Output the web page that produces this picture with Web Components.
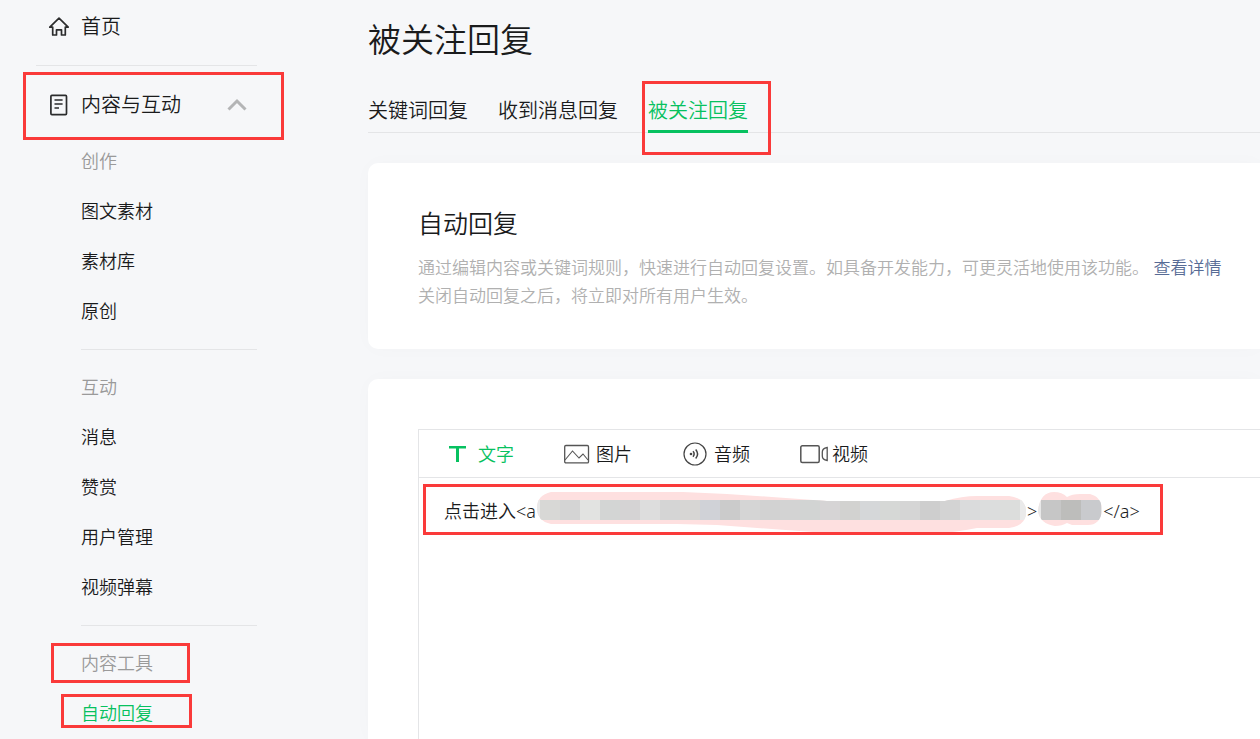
<!DOCTYPE html>
<html lang="zh-CN">
<head>
<meta charset="utf-8">
<meta name="viewport" content="width=device-width, initial-scale=1">
<title>被关注回复</title>
<style>
  html { background: #f6f7f9; }
  body {
    margin: 0;
    color: #1a1b1c;
    font-family: "Noto Sans", "Noto Sans CJK SC", sans-serif;
    font-weight: 350;
    font-size: 18px;
    overflow-x: hidden;
    --green: #07c160;
    --line: #e4e5e7;
    --muted: #9a9a9a;
    --mark: #fa3a3a;
  }
</style>
</head>
<body>
<app-shell>
  <side-nav slot="nav">
    <nav-entry icon="home">首页</nav-entry>
    <nav-divider wide></nav-divider>
    <nav-entry icon="doc" expanded marked>内容与互动</nav-entry>
    <nav-label>创作</nav-label>
    <nav-link>图文素材</nav-link>
    <nav-link>素材库</nav-link>
    <nav-link>原创</nav-link>
    <nav-divider></nav-divider>
    <nav-label>互动</nav-label>
    <nav-link>消息</nav-link>
    <nav-link>赞赏</nav-link>
    <nav-link>用户管理</nav-link>
    <nav-link>视频弹幕</nav-link>
    <nav-divider></nav-divider>
    <nav-label marked>内容工具</nav-label>
    <nav-link active marked>自动回复</nav-link>
  </side-nav>
  <page-title>被关注回复</page-title>
  <tab-bar>
    <tab-item>关键词回复</tab-item>
    <tab-item>收到消息回复</tab-item>
    <tab-item active>被关注回复</tab-item>
  </tab-bar>
  <info-card heading="自动回复">
    通过编辑内容或关键词规则，快速进行自动回复设置。如具备开发能力，可更灵活地使用该功能。<text-link>查看详情</text-link><br>关闭自动回复之后，将立即对所有用户生效。
  </info-card>
  <editor-card>
    <tool-item slot="tools" icon="text" active>文字</tool-item>
    <tool-item slot="tools" icon="image">图片</tool-item>
    <tool-item slot="tools" icon="audio">音频</tool-item>
    <tool-item slot="tools" icon="video">视频</tool-item>
    <span>点击进入&lt;a</span><pixel-smear kind="long"></pixel-smear><span>&gt;</span><pixel-smear kind="short"></pixel-smear><span>&lt;/a&gt;</span>
  </editor-card>
</app-shell>

<script>
const define = (name, render) => customElements.define(name, class extends HTMLElement {
  constructor() { super(); this.attachShadow({ mode: 'open' }); }
  connectedCallback() { this.shadowRoot.innerHTML = render(this); }
});

const icons = {
  home: `<svg width="22" height="22" viewBox="0 0 22 22" fill="none" stroke="#2b2c2d" stroke-width="1.7" stroke-linejoin="round"><path d="M11 2.2 L20.2 11.2 H17.3 V19 H13.5 V13.8 H8.5 V19 H4.7 V11.2 H1.8 Z"/></svg>`,
  doc: `<svg width="22" height="22" viewBox="0 0 22 22" fill="none" stroke="#2b2c2d" stroke-width="1.7"><rect x="2.9" y="1.4" width="15.6" height="19.2" rx="1"/><path d="M6.5 6 H14.6 M6.5 10 H14.6 M6.5 14 H11"/></svg>`,
  chevron: `<svg width="20" height="14" viewBox="0 0 20 14" fill="none" stroke="#b4b5b6" stroke-width="3"><path d="M1.5 11.5 L10 3 L18.5 11.5"/></svg>`,
  text: `<svg width="28" height="24" viewBox="0 0 28 24"><path d="M3 4 H20 V6.6 H13 V20 H10 V6.6 H3 Z" fill="#07c160"/></svg>`,
  image: `<svg width="28" height="24" viewBox="0 0 28 24" fill="none" stroke="#555" stroke-width="1.3"><rect x=".7" y="3.5" width="23.8" height="17.4" rx="1.2"/><path stroke-width="1.1" d="M1 18 L8.5 9 L15 16 L19 12 L24 18"/></svg>`,
  audio: `<svg width="28" height="24" viewBox="0 0 28 24" fill="none" stroke="#444" stroke-width="1.2"><circle cx="13" cy="12" r="11"/><circle cx="9" cy="12" r="1.3" fill="#444" stroke="none"/><path stroke-width="1.5" d="M11 9.3 Q13.3 12 11 14.7 M13.7 7.5 Q17.5 12 13.7 16.5"/></svg>`,
  video: `<svg width="28" height="24" viewBox="0 0 28 24" fill="none" stroke="#555" stroke-width="1.5"><rect x=".8" y="3.8" width="18.4" height="16.6" rx="1.5"/><path stroke-width="1.3" d="M27.2 5.5 V18.5 C24 18 22.3 16 22.3 14 V10 C22.3 8 24 6 27.2 5.5 Z"/></svg>`
};

/* Red outline laid over its positioned parent; insets come from --inset. */
define('callout-box', () => `
  <style>:host { display: block; position: absolute; inset: var(--inset, 0); border: 3px solid var(--mark); pointer-events: none; z-index: 2; }</style>`);

define('app-shell', () => `
  <style>
    :host { display: flex; align-items: flex-start; min-height: 100vh; }
    main { flex: 1; min-width: 0; }
  </style>
  <slot name="nav"></slot><main><slot></slot></main>`);

define('side-nav', () => `
  <style>:host { display: block; flex: none; width: 368px; box-sizing: border-box; padding: 0 111px 0 36px; }</style>
  <nav><slot></slot></nav>`);

define('nav-entry', el => `
  <style>
    :host { display: block; position: relative; font-size: 20px; line-height: 28px; --inset: -4px -27px -4px -13px; }
    a { display: flex; align-items: center; box-sizing: border-box; height: ${el.hasAttribute('expanded') ? 60 : 55}px; padding: 0 10px 2px 12px; color: inherit; text-decoration: none; }
    .icon { width: 33px; display: flex; }
    .label { flex: 1; }
    svg { display: block; }
  </style>
  <a href="#"><span class="icon">${icons[el.getAttribute('icon')]}</span><span class="label"><slot></slot></span>${el.hasAttribute('expanded') ? icons.chevron : ''}</a>
  ${el.hasAttribute('marked') ? '<callout-box></callout-box>' : ''}`);

define('nav-divider', () => `
  <style>
    :host { display: block; height: 1px; margin: 13px 0 12px 45px; background: var(--line); }
    :host([wide]) { margin: 10px 0; }
  </style>`);

define('nav-label', el => `
  <style>
    :host { display: block; padding-left: 45px; line-height: 50px; color: var(--muted); --inset: 5px -37px 5px -30px; }
    span { display: inline-block; position: relative; vertical-align: top; }
  </style>
  <span><slot></slot>${el.hasAttribute('marked') ? '<callout-box></callout-box>' : ''}</span>`);

define('nav-link', el => `
  <style>
    :host { display: block; padding-left: 45px; line-height: 50px; --inset: 6px -39px 10px -20px; }
    :host([active]) { color: var(--green); }
    a { display: inline-block; position: relative; vertical-align: top; color: inherit; text-decoration: none; }
  </style>
  <a href="#"><slot></slot>${el.hasAttribute('marked') ? '<callout-box></callout-box>' : ''}</a>`);

define('page-title', () => `
  <style>
    :host { display: block; padding: 20px 0 36px; }
    h1 { margin: 0; font-size: 33px; line-height: 40px; font-weight: inherit; }
  </style>
  <h1><slot></slot></h1>`);

define('tab-bar', () => `
  <style>:host { display: flex; gap: 30px; border-bottom: 1px solid var(--line); margin-bottom: 30px; }</style>
  <slot></slot>`);

define('tab-item', el => `
  <style>
    :host { display: block; position: relative; margin-bottom: -1px; --inset: -15px -23px -22px -6px; }
    a { display: block; font-size: 20px; line-height: 30px; padding-bottom: 4px; border-bottom: 3px solid transparent; color: inherit; text-decoration: none; }
    :host([active]) a { color: var(--green); border-color: var(--green); }
  </style>
  <a href="#"><slot></slot></a>${el.hasAttribute('active') ? '<callout-box></callout-box>' : ''}`);

define('info-card', el => `
  <style>
    :host { display: block; background: #fff; border-radius: 10px 0 0 10px; padding: 45px 0 39px 50px; margin-bottom: 30px; box-shadow: 0 0 20px rgba(0, 0, 0, .02); }
    h2 { margin: 0 0 16px; font-size: 25px; line-height: 30px; font-weight: inherit; }
    p { margin: 0; font-size: 17px; line-height: 28px; color: #b0b0b0; }
  </style>
  <h2>${el.getAttribute('heading')}</h2><p><slot></slot></p>`);

define('text-link', () => `
  <style>:host { display: inline; } a { color: #576b95; text-decoration: none; }</style><a href="#"><slot></slot></a>`);

define('editor-card', () => `
  <style>
    :host { display: block; background: #fff; border-radius: 10px 0 0 0; padding: 50px 0 0 50px; box-shadow: 0 0 20px rgba(0, 0, 0, .02); }
    .editor { border: 1px solid var(--line); border-width: 1px 0 0 1px; }
    .tools { display: flex; gap: 50px; height: 47px; padding-left: 27px; border-bottom: 1px solid var(--line); }
    .body { min-height: calc(100vh - 491px); padding: 13px 0 0 25px; outline: none; }
    .line { display: inline-flex; align-items: center; gap: 1px; height: 40px; line-height: 38px; position: relative; vertical-align: top; white-space: nowrap; --inset: -7px -23px -4px -21px; }
  </style>
  <div class="editor">
    <div class="tools"><slot name="tools"></slot></div>
    <div class="body" role="textbox" aria-multiline="true" aria-label="回复内容" tabindex="0"><div class="line"><slot></slot><callout-box></callout-box></div></div>
  </div>`);

define('tool-item', el => `
  <style>
    :host { display: block; }
    button { display: flex; align-items: center; height: 100%; padding: 0; border: 0; background: none; font: inherit; line-height: 24px; color: inherit; }
    .icon { display: flex; width: 32px; }
    :host([active]) button { color: var(--green); }
  </style>
  <button type="button"><span class="icon">${icons[el.getAttribute('icon')]}</span><slot></slot></button>`);

/* Mosaic strip over a pale brush stroke that hides private text. */
const smears = {
  long: {
    width: 489, first: 3,
    pink: 'M14 1 H146 L190 3 L235 6 L290 10 H408 Q425 5 440 5 H472 Q489 7 489 21 Q489 35 472 37 H440 Q415 42 400 42 H290 L235 38 L180 34 L140 33 H14 Q0 30 0 17 Q0 4 14 1 Z',
    cells: 'd8d8d6 d4d4d4 e2e3e1 d3d5d4 d5d3d4 dddddd d5d5d5 d7d6d4 d0d2d7 cbcbcb d5d5d5 d2d2d2 d3d3d3 d2d4d3 d6d4d5 d2d2d0 d5d7d9 d6d8d6 d5d5d5 cecece d3d3d3 dadbdc dcdddd dcdddc eaeaea'
  },
  short: {
    width: 64, first: 3,
    pink: 'M0 20 Q2 1 16 1 Q24 1 29 6 Q34 3 42 3 H52 Q64 6 64 20 Q62 34 50 34 H34 L29 32 Q24 35 17 35 Q2 33 0 20 Z',
    cells: 'c6c6c6 bdbdbb c9cacd'
  }
};
define('pixel-smear', el => {
  const kind = el.getAttribute('kind'), s = smears[kind];
  const rects = s.cells.split(' ').map((c, i) => `<rect x="${s.first + i * 20}" y="9" width="20" height="20" fill="#${c}"/>`).join('');
  return `
  <style>:host { display: block; flex: none; height: 40px; } svg { display: block; overflow: visible; }</style>
  <svg width="${s.width}" height="40" aria-hidden="true" shape-rendering="crispEdges">
    <clipPath id="c"><path d="${s.pink}"/></clipPath>
    <g clip-path="url(#c)"><rect width="${s.width}" height="42" fill="#fee0e0"/><rect y="9" width="${s.width}" height="20" fill="#e8e8e8"/>${rects}</g>
  </svg>`;
});
</script>
</body>
</html>
